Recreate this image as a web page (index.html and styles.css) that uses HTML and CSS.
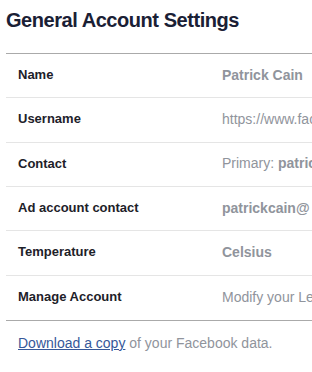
FILE: index.html
```
<!DOCTYPE html>
<html lang="en">
<head>
  <meta charset="UTF-8">
  <meta name="viewport" content="width=device-width, initial-scale=1.0">
  <title>General Account Settings</title>
  <link rel="stylesheet" href="styles.css">
</head>
<body>
  <div class="settings">
    <h2 class="settings-title">General Account Settings</h2>

    <div class="settings-list">
      <div class="row">
        <div class="label">Name</div>
        <div class="value strong">Patrick Cain</div>
      </div>
      <div class="row">
        <div class="label">Username</div>
        <div class="value">https://www.fac</div>
      </div>
      <div class="row">
        <div class="label">Contact</div>
        <div class="value">Primary: <b>patric</b></div>
      </div>
      <div class="row">
        <div class="label">Ad account contact</div>
        <div class="value strong">patrickcain@</div>
      </div>
      <div class="row">
        <div class="label">Temperature</div>
        <div class="value strong">Celsius</div>
      </div>
      <div class="row">
        <div class="label">Manage Account</div>
        <div class="value">Modify your Le</div>
      </div>
    </div>

    <p class="footer"><a href="#">Download a copy</a> of your Facebook data.</p>
  </div>
</body>
</html>
```

FILE: styles.css
```
html, body {
  margin: 0;
  padding: 0;
  overflow: hidden;
  background: #fff;
}

body {
  font-family: "Liberation Sans", Arial, sans-serif;
  color: #1d2129;
}

.settings {
  width: 306px;
  padding: 0 0 0 6px;
}

.settings-title {
  margin: 0;
  padding-top: 8px;
  height: 53px;
  box-sizing: border-box;
  font-size: 20px;
  font-weight: bold;
  line-height: 24px;
  letter-spacing: -0.45px;
  color: #1a2035;
}

.settings-list {
  border-top: 1px solid #aaa;
  border-bottom: 1px solid #aaa;
}

.row {
  display: flex;
  align-items: center;
  height: 44.33px;
  box-sizing: border-box;
  padding-bottom: 2px;
  border-bottom: 1px solid #e5e5e5;
  font-size: 13px;
}

.row:last-child {
  border-bottom: none;
}

.label {
  width: 204px;
  padding-left: 12px;
  flex-shrink: 0;
  font-weight: bold;
}

.value {
  font-size: 14px;
  color: #90949c;
  white-space: nowrap;
  overflow: hidden;
}

.value.strong,
.value b {
  font-weight: bold;
}

.footer {
  margin: 0;
  padding: 14px 0 0 12px;
  font-size: 14px;
  color: #90949c;
}

.footer a {
  color: #365899;
  text-decoration: underline;
}
```
